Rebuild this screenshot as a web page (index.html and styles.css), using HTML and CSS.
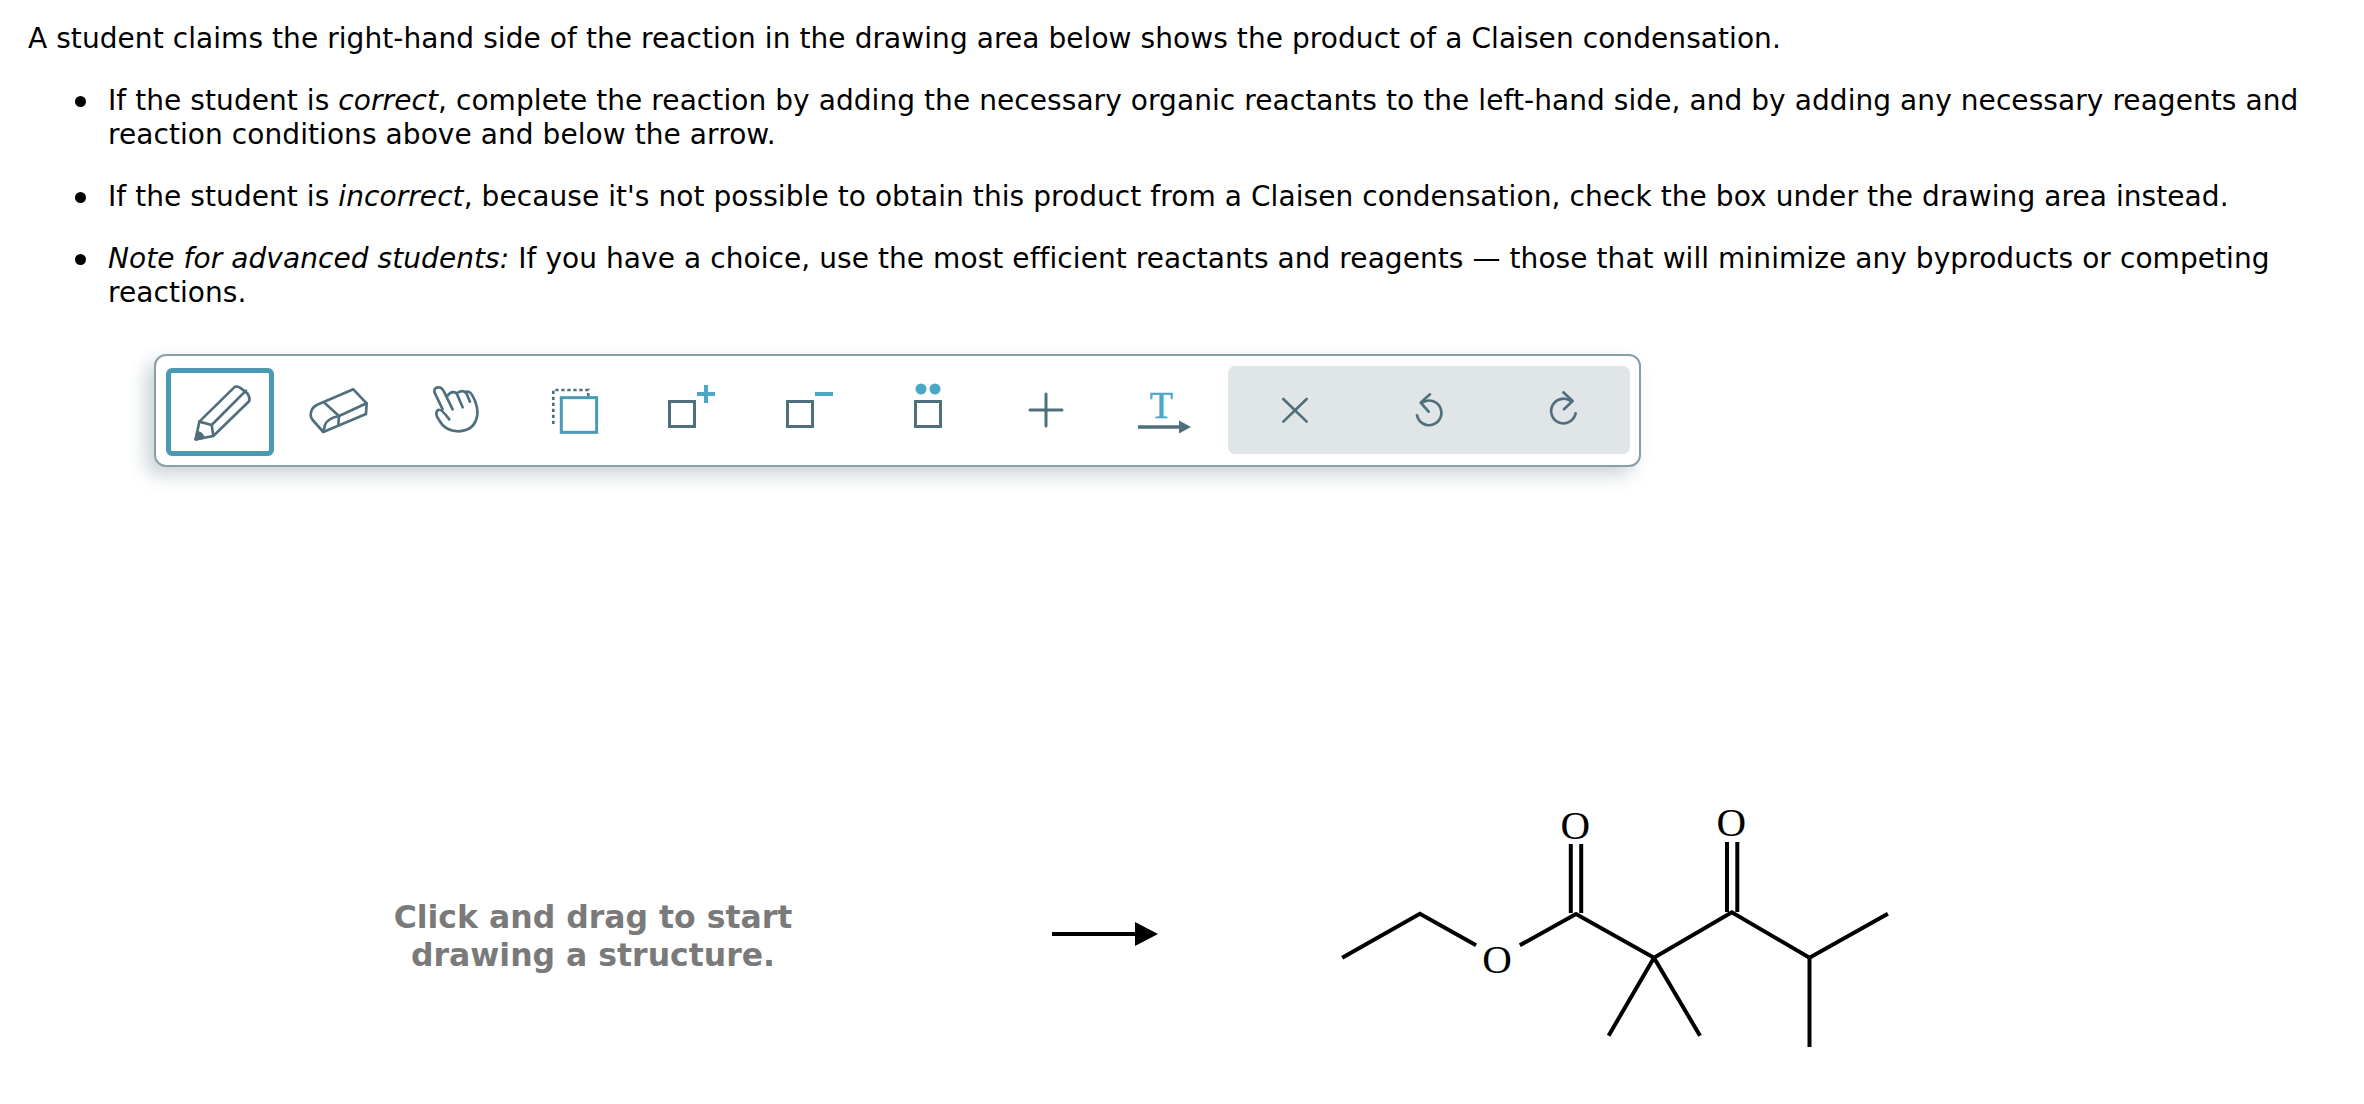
FILE: index.html
```html
<!DOCTYPE html>
<html lang="en">
<head>
<meta charset="utf-8">
<title>Claisen condensation</title>
<link rel="stylesheet" href="styles.css">
</head>
<body>
<main class="page">
  <p class="intro">A student claims the right-hand side of the reaction in the drawing area below shows the product of a Claisen condensation.</p>
  <ul class="notes">
    <li>If the student is <em>correct</em>, complete the reaction by adding the necessary organic reactants to the left-hand side, and by adding any necessary reagents and reaction conditions above and below the arrow.</li>
    <li>If the student is <em>incorrect</em>, because it's not possible to obtain this product from a Claisen condensation, check the box under the drawing area instead.</li>
    <li><em>Note for advanced students:</em> If you have a choice, use the most efficient reactants and reagents — those that will minimize any byproducts or competing reactions.</li>
  </ul>

  <div class="toolbar">
    <div class="tool tool-active">
      <svg class="icon" viewBox="161 366 118 88"><g transform="translate(140 340) scale(.3333)" class="st">
        <path d="M167 298 L178 245 L285 140 Q290 138 300 143 L322 160 Q330 170 328 183 L220 288 Z"/>
        <path d="M178 245 L215 255 L220 288"/>
        <path d="M215 255 L318 152"/>
        <path d="M167 298 L172 278 Q185 278 190 293 Z" class="fill"/>
      </g></svg>
    </div>
    <div class="tool">
      <svg class="icon" viewBox="279 366 118 88"><g transform="translate(140 340) scale(.3333)" class="st">
        <path d="M512 225 Q512 205 530 195 L640 148 L680 190 L678 222 L550 276 L518 240 Q512 232 512 225 Z"/>
        <path d="M555 190 L597 228 L595 255"/>
        <path d="M597 228 L680 190"/>
        <path d="M550 276 L555 255 Q562 235 597 228"/>
      </g></svg>
    </div>
    <div class="tool">
      <svg class="icon" viewBox="397 366 118 88"><g transform="translate(140 340) scale(.3333)" class="st">
        <path d="M908 208 L884 158 Q880 145 893 142 Q905 140 912 155 L938 208"/>
        <path d="M922 168 Q935 150 950 160 L968 202"/>
        <path d="M950 160 Q965 148 978 157 L990 185"/>
        <path d="M975 157 Q990 150 998 168 Q1015 200 1012 225 Q1005 272 955 274 Q915 274 897 240 Q882 218 895 210 Q903 205 928 238"/>
      </g></svg>
    </div>
    <div class="tool">
      <svg class="icon" viewBox="515 366 118 88"><g transform="translate(140 340) scale(.3333)">
        <path class="dash" d="M1240 252 V150 H1345 V170"/>
        <rect class="teal" x="1264" y="173" width="106" height="104"/>
      </g></svg>
    </div>
    <div class="tool">
      <svg class="icon" viewBox="633 366 118 88">
        <rect class="box" x="669.500" y="401.500" width="25" height="25"/>
        <path class="accent" d="M697 394 H715 M706 385 V403"/>
      </svg>
    </div>
    <div class="tool">
      <svg class="icon" viewBox="751 366 118 88">
        <rect class="box" x="787.500" y="401.500" width="25" height="25"/>
        <path class="accent" d="M815 394 H833"/>
      </svg>
    </div>
    <div class="tool">
      <svg class="icon" viewBox="869 366 118 88">
        <rect class="box" x="915.500" y="401.500" width="25" height="25"/>
        <circle class="dot" cx="921" cy="389" r="5.500"/>
        <circle class="dot" cx="935" cy="389" r="5.500"/>
      </svg>
    </div>
    <div class="tool">
      <svg class="icon" viewBox="987 366 118 88">
        <path class="thin" d="M1030 410 H1062 M1046 394 V426"/>
      </svg>
    </div>
    <div class="tool">
      <svg class="icon" viewBox="1105 366 118 88">
        <text class="tee" x="1161.500" y="418">T</text>
        <path class="arrow-line" d="M1138 427 H1181"/>
        <path class="arrow-head" d="M1179 420.500 L1191 427 L1179 433.500 Z"/>
      </svg>
    </div>
    <div class="tool-group">
      <div class="group-item">
        <svg class="icon" viewBox="1228 366 134 88"><g transform="translate(1200 340) scale(.3333)" class="st">
          <path d="M250 177 L320 245 M320 177 L250 245"/>
        </g></svg>
      </div>
      <div class="group-item">
        <svg class="icon" viewBox="1362 366 134 88"><g transform="translate(1200 340) scale(.3333)" class="st">
          <path d="M690 163 L662 188 L686 215"/>
          <path d="M668 187 A37 37 0 1 1 651 226"/>
        </g></svg>
      </div>
      <div class="group-item">
        <svg class="icon" viewBox="1496 366 134 88"><g transform="translate(1200 340) scale(.3333)" class="st">
          <path d="M1090 157 L1118 183 L1092 208"/>
          <path d="M1112 183 A37 37 0 1 0 1127 220"/>
        </g></svg>
      </div>
    </div>
  </div>

  <section class="canvas">
    <p class="hint">Click and drag to start<br>drawing a structure.</p>
    <svg class="reaction" viewBox="0 467 2364 637">
      <path class="rx-line" d="M1052 934 H1138"/>
      <path class="rx-fill" d="M1135 922 L1158 934 L1135 946 Z"/>
      <path class="rx-line" d="M1342.200 957.700 L1419.900 913.700 L1476.100 945.300"/>
      <path class="rx-line" d="M1519.800 945.300 L1576 914 L1654 957.700 L1731.800 912.300 L1809.500 957.700 L1887.900 913.700"/>
      <path class="rx-line" d="M1570.800 844 V913 M1581.200 844 V913"/>
      <path class="rx-line" d="M1727 842 V912 M1737.300 842 V912"/>
      <path class="rx-line" d="M1654 957.700 L1608.600 1035.700 M1654 957.700 L1700 1035.700"/>
      <path class="rx-line" d="M1809.500 957.700 V1047"/>
      <text class="atom" x="1497.200" y="973">O</text>
      <text class="atom" x="1575.300" y="839">O</text>
      <text class="atom" x="1731.400" y="836">O</text>
    </svg>
  </section>
</main>
</body>
</html>
```
FILE: styles.css
```css
html, body {
  margin: 0;
  padding: 0;
  background: #fff;
}

body {
  font-family: "DejaVu Sans", Verdana, sans-serif;
  font-size: 28px;
  line-height: 34px;
  letter-spacing: .07px;
  color: #000;
  overflow: hidden;
}

.page {
  width: 2364px;
  height: 1104px;
  display: flex;
  flex-direction: column;
  padding-top: 22px;
  box-sizing: border-box;
}

.intro {
  margin: 0 0 28px 28px;
}

.notes {
  margin: 0;
  padding: 0 0 0 108px;
  width: 2200px;
  box-sizing: content-box;
  list-style: none;
}

.notes li {
  position: relative;
  margin-bottom: 28px;
}

.notes li::before {
  content: "";
  position: absolute;
  left: -33px;
  top: 12px;
  width: 11px;
  height: 11px;
  border-radius: 50%;
  background: #000;
}

.notes li:last-child {
  margin-bottom: 0;
}

.toolbar {
  display: flex;
  align-items: flex-start;
  box-sizing: border-box;
  width: 1487px;
  height: 113px;
  margin: 44px 0 0 154px;
  padding: 10px 9px 0 5px;
  border: 2px solid #8a9ea8;
  border-radius: 12px;
  background: #fff;
  box-shadow: -8px 8px 18px rgba(79, 111, 125, .3);
  flex: none;
}

.tool {
  width: 118px;
  height: 88px;
  flex: none;
}

.tool-active {
  position: relative;
}

.tool-active::after {
  content: "";
  position: absolute;
  left: 5px;
  top: 2px;
  width: 108px;
  height: 88px;
  box-sizing: border-box;
  border: 5px solid #4a9ab3;
  border-radius: 6px;
}

.tool-group {
  display: flex;
  flex: none;
  margin-left: 5px;
  width: 402px;
  height: 88px;
  background: #e0e5e8;
  border-radius: 7px;
}

.group-item {
  width: 134px;
  height: 88px;
  flex: none;
}

.icon {
  display: block;
  width: 100%;
  height: 100%;
}

.st path {
  fill: none;
  stroke: #4f6f7d;
  stroke-width: 8;
  stroke-linecap: round;
  stroke-linejoin: round;
}

.st path.fill {
  fill: #4f6f7d;
}

.dash {
  fill: none;
  stroke: #4f6f7d;
  stroke-width: 8;
  stroke-dasharray: 10 8;
}

.teal {
  fill: none;
  stroke: #4a9ab3;
  stroke-width: 9;
}

.box {
  fill: none;
  stroke: #4f6f7d;
  stroke-width: 3;
}

.accent {
  fill: none;
  stroke: #4aa8c6;
  stroke-width: 4;
}

.dot {
  fill: #4aa8c6;
}

.thin {
  fill: none;
  stroke: #4f6f7d;
  stroke-width: 3;
  stroke-linecap: round;
}

.tee {
  font-family: "Liberation Serif", serif;
  font-size: 38px;
  fill: #4aa8c6;
  stroke: #4aa8c6;
  stroke-width: .5px;
  text-anchor: middle;
}

.arrow-line {
  stroke: #4f6f7d;
  stroke-width: 3.500;
  fill: none;
}

.arrow-head {
  fill: #4f6f7d;
}

.canvas {
  position: relative;
  flex: 1;
  min-height: 0;
}

.reaction {
  position: absolute;
  left: 0;
  top: 0;
  width: 2364px;
  height: 637px;
}

.hint {
  position: absolute;
  z-index: 1;
  left: 293px;
  top: 431px;
  width: 600px;
  margin: 0;
  text-align: center;
  font-weight: 700;
  font-size: 31.500px;
  line-height: 38px;
  letter-spacing: 0;
  color: #7a7a7a;
}

.rx-line {
  fill: none;
  stroke: #000;
  stroke-width: 4;
}

.rx-fill {
  fill: #000;
}

.atom {
  font-family: "Liberation Serif", serif;
  font-size: 41px;
  fill: #000;
  text-anchor: middle;
}
```
